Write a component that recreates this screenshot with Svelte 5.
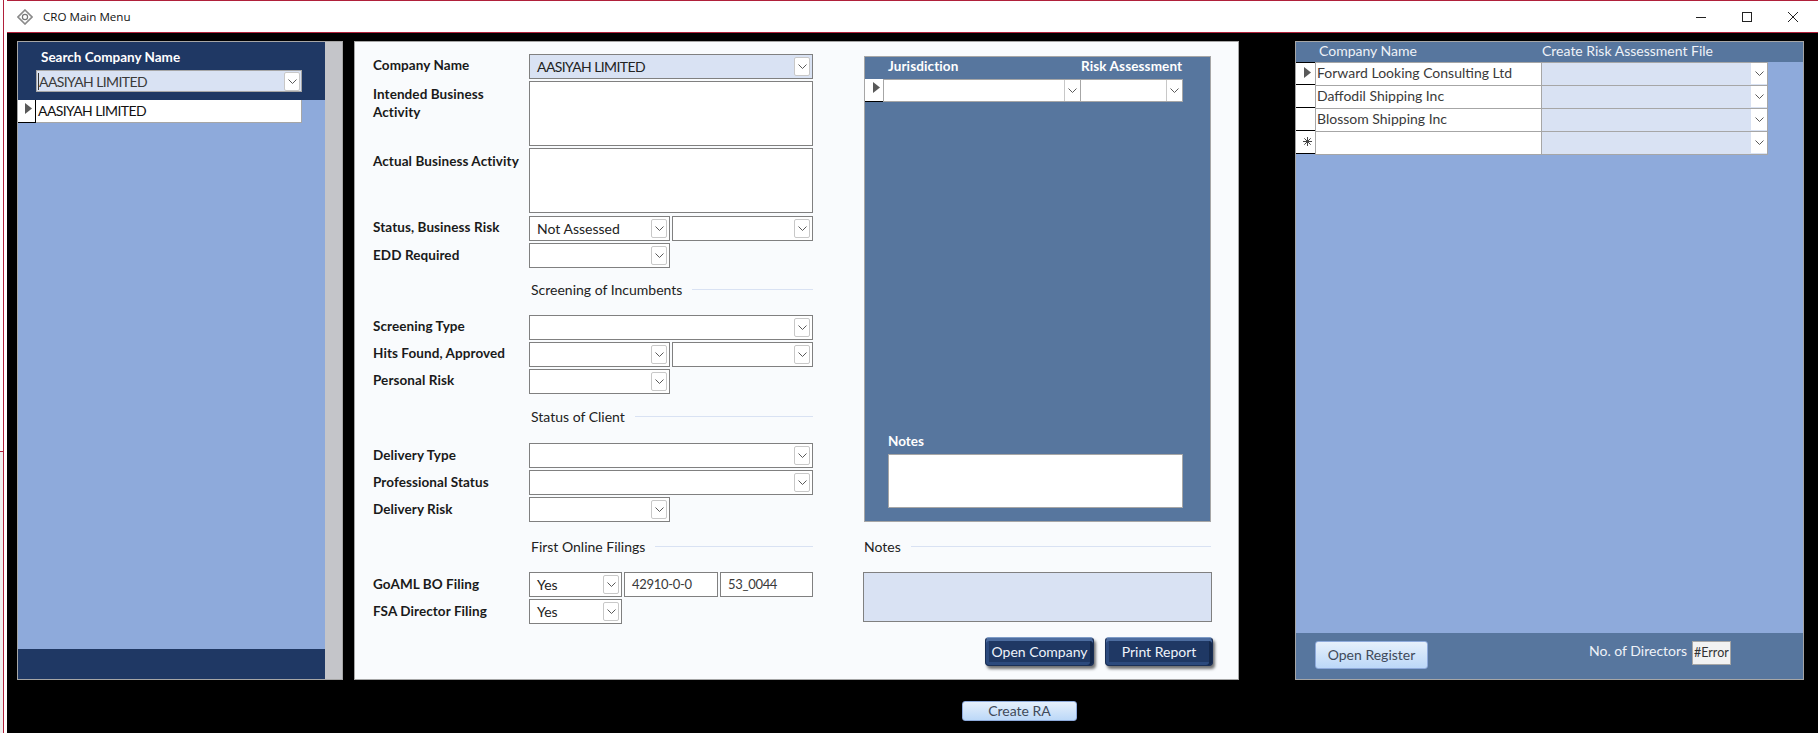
<script>
  const incumbents = [
    { label: 'Screening Type', wide: true },
    { label: 'Hits Found, Approved', pair: true },
    { label: 'Personal Risk' }
  ];
  const client = [
    { label: 'Delivery Type', wide: true },
    { label: 'Professional Status', wide: true },
    { label: 'Delivery Risk' }
  ];
  const subRows = [
    { name: 'Forward Looking Consulting Ltd', mark: 'current' },
    { name: 'Daffodil Shipping Inc', mark: '' },
    { name: 'Blossom Shipping Inc', mark: '' },
    { name: '', mark: 'new' }
  ];
</script>

{#snippet chevron()}
  <svg width="9" height="5" viewBox="0 0 9 5"><path d="M.5.5l4 4 4-4" fill="none" stroke="#5a5a5a" /></svg>
{/snippet}

{#snippet combo(value, cls)}
  <div class="combo {cls}">
    <span class="value">{value}</span>
    <span class="arrow">{@render chevron()}</span>
  </div>
{/snippet}

{#snippet pointer()}
  <svg width="7" height="11" viewBox="0 0 7 11"><path d="M0 0l7 5.5L0 11z" fill="#595959" /></svg>
{/snippet}

{#snippet field(row, cls)}
  <div class="row {cls}">
    <div class="label">{row.label}</div>
    {#if row.wide}
      {@render combo('', 'w284')}
    {:else if row.pair}
      {@render combo('', 'w141')}
      {@render combo('', 'w141')}
    {:else}
      {@render combo('', 'w141')}
    {/if}
  </div>
{/snippet}

<div class="window">
  <div class="edge">
    <div class="edge-l"><div class="edge-top"></div></div>
    <div class="edge-r"></div>
  </div>

  <div class="main">
    <header class="titlebar">
      <svg class="appicon" width="16" height="16" viewBox="0 0 16 16">
        <path d="M8 1l7 7-7 7-7-7z" fill="#fff" stroke="#8a8a8a" stroke-width="1.6" />
        <circle cx="8" cy="8" r="2.6" fill="none" stroke="#777" stroke-width="1.2" />
      </svg>
      <span class="title">CRO Main Menu</span>
      <div class="controls">
        <svg width="10" height="10" viewBox="0 0 10 10"><path d="M0 5.5h10" stroke="#222" /></svg>
        <svg width="10" height="10" viewBox="0 0 10 10"><rect x=".5" y=".5" width="9" height="9" fill="none" stroke="#222" /></svg>
        <svg width="10" height="10" viewBox="0 0 10 10"><path d="M0 0l10 10M10 0L0 10" stroke="#222" /></svg>
      </div>
    </header>

    <div class="panels">
      <section class="panel search">
        <div class="search-body">
          <div class="search-head">
            <div class="search-title">Search Company Name</div>
            <div class="combo search-combo">
              <span class="value">AASIYAH LIMITED</span>
              <span class="arrow">{@render chevron()}</span>
            </div>
          </div>
          <div class="search-list">
            <div class="selector boxed">{@render pointer()}</div>
            <div class="search-result">AASIYAH LIMITED</div>
          </div>
          <div class="search-foot"></div>
        </div>
        <div class="scroll"></div>
      </section>

      <section class="panel detail">
        <div class="form">
          <div class="row">
            <div class="label">Company Name</div>
            {@render combo('AASIYAH LIMITED', 'w284 tinted')}
          </div>
          <div class="row tall">
            <div class="label">Intended Business<br />Activity</div>
            <div class="box w284"></div>
          </div>
          <div class="row tall">
            <div class="label">Actual Business Activity</div>
            <div class="box w284"></div>
          </div>
          <div class="row after-tall">
            <div class="label">Status, Business Risk</div>
            {@render combo('Not Assessed', 'w141')}
            {@render combo('', 'w141')}
          </div>
          <div class="row low">
            <div class="label">EDD Required</div>
            {@render combo('', 'w141')}
          </div>

          <div class="section s1"><span>Screening of Incumbents</span><i></i></div>
          {#each incumbents as row}{@render field(row, '')}{/each}

          <div class="section s2"><span>Status of Client</span><i></i></div>
          {#each client as row}{@render field(row, 'low')}{/each}

          <div class="section s3"><span>First Online Filings</span><i></i></div>
          <div class="row low">
            <div class="label">GoAML BO Filing</div>
            {@render combo('Yes', 'w93')}
            <div class="box w94 text">42910-0-0</div>
            <div class="box w93 text">53_0044</div>
          </div>
          <div class="row low">
            <div class="label">FSA Director Filing</div>
            {@render combo('Yes', 'w93')}
          </div>
        </div>

        <div class="side">
          <div class="juris">
            <div class="juris-head">
              <span class="jh1">Jurisdiction</span>
              <span>Risk Assessment</span>
            </div>
            <div class="juris-row">
              <div class="selector">{@render pointer()}</div>
              <div class="gcell jc1"><span class="arrow">{@render chevron()}</span></div>
              <div class="gcell jc2"><span class="arrow">{@render chevron()}</span></div>
            </div>
            <div class="juris-notes">
              <div class="jn-label">Notes</div>
              <div class="jn-box"></div>
            </div>
          </div>

          <div class="section notes-sec"><span>Notes</span><i></i></div>
          <div class="notes-box"></div>

          <div class="actions">
            <button class="navy open">Open Company</button>
            <button class="navy">Print Report</button>
          </div>
        </div>
      </section>

      <section class="panel sub">
        <div class="sub-head">
          <span class="sh1">Company Name</span>
          <span>Create Risk Assessment File</span>
        </div>
        <div class="sub-body">
          {#each subRows as r}
            <div class="sub-row">
              <div class="selector">
                {#if r.mark === 'current'}
                  {@render pointer()}
                {:else if r.mark === 'new'}
                  <svg width="11" height="11" viewBox="0 0 11 11"><path d="M5.5 1v9M1 5.5h9M2.3 2.3l6.4 6.4M8.7 2.3l-6.4 6.4" stroke="#444" /></svg>
                {/if}
              </div>
              <div class="sub-name">{r.name}</div>
              <div class="sub-risk"><span class="arrow">{@render chevron()}</span></div>
            </div>
          {/each}
        </div>
        <div class="sub-foot">
          <button class="light reg">Open Register</button>
          <span class="dir-label">No. of Directors</span>
          <div class="dir-box">#Error</div>
        </div>
      </section>
    </div>

    <div class="bottom"><button class="light ra">Create RA</button></div>
  </div>
</div>

<style>
  :global(body) {
    margin: 0;
    background: #000;
  }
  .window {
    width: 1818px;
    height: 733px;
    display: flex;
    background: #000;
    overflow: hidden;
    font-family: Lato, "Open Sans", sans-serif;
    font-size: 14px;
    color: #222;
  }
  .edge {
    width: 7px;
    display: flex;
    flex: none;
  }
  .edge-l {
    width: 3px;
    background: #f0f0f0;
  }
  .edge-top {
    height: 451px;
    background: #fff;
    border-bottom: 1px solid #b0203a;
  }
  .edge-r {
    width: 3px;
    background: #fff;
    border-left: 1px solid #b0203a;
  }
  .main {
    flex: 1;
    min-width: 0;
  }
  .titlebar {
    height: 31px;
    display: flex;
    align-items: center;
    background: #fff;
    border-top: 1px solid #b0203a;
    border-bottom: 1px solid #b0203a;
    padding-left: 10px;
  }
  .appicon {
    margin-right: 10px;
  }
  .title {
    font-family: "Open Sans", sans-serif;
    font-size: 11.6px;
    color: #111;
  }
  .controls {
    margin-left: auto;
    display: flex;
    gap: 36px;
    padding-right: 20px;
  }
  .panels {
    display: flex;
    padding: 8px 0 0 10px;
    height: 639px;
  }
  .panel {
    box-sizing: border-box;
    height: 639px;
    border: 1px solid #a6a6a6;
    flex: none;
  }
  .search {
    width: 326px;
    display: flex;
    margin-right: 11px;
  }
  .search-body {
    width: 307px;
    display: flex;
    flex-direction: column;
    background: #8eaadb;
  }
  .scroll {
    flex: 1;
    background: #c4c5c9;
  }
  .search-head {
    height: 58px;
    box-sizing: border-box;
    background: #1f3864;
    padding: 5px 0 0 18px;
  }
  .search-title {
    color: #fff;
    font-size: 13.5px;
    font-weight: 700;
    padding-left: 5px;
    line-height: 20px;
    height: 23px;
  }
  .combo {
    box-sizing: border-box;
    height: 25px;
    border: 1px solid #808080;
    background: #fff;
    display: flex;
    align-items: center;
    flex: none;
    padding-right: 2px;
  }
  .value {
    flex: 1;
    padding-left: 7px;
    white-space: nowrap;
  }
  .arrow {
    box-sizing: border-box;
    width: 16px;
    height: 19px;
    background: #fff;
    border: 1px solid #c8c8c8;
    border-radius: 2px;
    display: flex;
    align-items: center;
    justify-content: center;
    flex: none;
  }
  .search-combo {
    width: 266px;
    height: 22px;
    background: #d9e2f3;
    border-color: #a6a6a6;
    padding-right: 1px;
  }
  .search-combo .value {
    margin-left: 1px;
    padding-left: 0;
    border-left: 1px solid #333;
    color: #3a3a3a;
    letter-spacing: -0.6px;
  }
  .tinted {
    background: #d9e2f3;
  }
  .tinted .value {
    letter-spacing: -0.6px;
  }
  .search-list {
    display: flex;
    height: 23px;
  }
  .selector {
    box-sizing: border-box;
    width: 18px;
    flex: none;
    background: #fff;
    border-bottom: 1px solid #000;
    display: flex;
    align-items: flex-start;
    justify-content: center;
    padding: 3px 0 0 4px;
  }
  .selector.boxed {
    border-right: 1px solid #000;
  }
  .search-result {
    box-sizing: border-box;
    width: 266px;
    background: #fff;
    border: 1px solid #a6a6a6;
    border-width: 0 1px 1px 0;
    padding-left: 2px;
    line-height: 21px;
    color: #111;
    letter-spacing: -0.6px;
  }
  .search-foot {
    margin-top: auto;
    height: 30px;
    background: #1f3864;
  }
  .detail {
    width: 885px;
    margin-right: 56px;
    background: #f9fbfd;
    display: flex;
  }
  .form {
    width: 509px;
    padding: 12px 0 0 18px;
    box-sizing: border-box;
    display: flex;
    flex-direction: column;
    flex: none;
  }
  .row {
    display: flex;
    gap: 2px;
    margin-bottom: 2px;
    flex: none;
  }
  .row.tall {
    height: 65px;
  }
  .row.after-tall {
    margin-top: 1px;
  }
  .label {
    width: 154px;
    flex: none;
    font-size: 13.5px;
    font-weight: 700;
    letter-spacing: 0.08px;
    color: #1a1a1a;
    line-height: 18px;
    padding-top: 2px;
    white-space: nowrap;
  }
  .tall .label {
    padding-top: 4px;
  }
  .low .label {
    padding-top: 3px;
  }
  .w284 { width: 284px; }
  .w141 { width: 141px; }
  .w93 { width: 93px; }
  .w94 { width: 94px; }
  .box {
    box-sizing: border-box;
    border: 1px solid #808080;
    background: #fff;
    flex: none;
  }
  .box.text {
    height: 25px;
    line-height: 23px;
    padding-left: 7px;
    color: #3a3a3a;
    font-size: 13px;
    letter-spacing: -0.3px;
  }
  .section {
    display: flex;
    align-items: center;
    gap: 10px;
    color: #222;
    flex: none;
  }
  .section i {
    flex: 1;
    height: 1px;
    background: #d9e2f3;
  }
  .s1, .s2, .s3 {
    margin-left: 156px;
    padding-left: 2px;
    width: 282px;
    box-sizing: content-box;
  }
  .s1 { height: 39px; padding-bottom: 5px; margin-bottom: 1px; }
  .s2 { height: 40px; padding-bottom: 5px; margin-bottom: 2px; }
  .s3 { height: 44px; padding-bottom: 4px; }
  .side {
    width: 350px;
    padding-top: 14px;
    display: flex;
    flex-direction: column;
  }
  .juris {
    box-sizing: border-box;
    width: 347px;
    height: 466px;
    border: 1px solid #a6a6a6;
    background: #57769e;
    display: flex;
    flex-direction: column;
  }
  .juris-head {
    box-sizing: border-box;
    display: flex;
    height: 22px;
    align-items: center;
    color: #fff;
    font-size: 13.5px;
    font-weight: 700;
    letter-spacing: 0.12px;
    padding: 0 0 5px 23px;
  }
  .jh1 {
    width: 193px;
  }
  .juris-row {
    display: flex;
    height: 23px;
  }
  .gcell {
    box-sizing: border-box;
    background: #fff;
    border: 1px solid #a6a6a6;
    display: flex;
    align-items: center;
    justify-content: flex-end;
    flex: none;
  }
  .gcell .arrow {
    height: 21px;
    border-width: 0 0 0 1px;
    border-radius: 0;
  }
  .jc1 { width: 198px; }
  .jc2 { width: 103px; margin-left: -1px; }
  .juris-notes {
    margin-top: auto;
    padding: 0 0 13px 23px;
  }
  .jn-label {
    color: #fff;
    font-size: 13.5px;
    font-weight: 700;
    height: 20px;
    line-height: 14px;
  }
  .jn-box {
    box-sizing: border-box;
    width: 295px;
    height: 54px;
    background: #fff;
    border: 1px solid #a6a6a6;
  }
  .notes-sec {
    height: 24px;
    margin-top: 12px;
    width: 347px;
  }
  .notes-box {
    box-sizing: border-box;
    margin: 14px 0 0 -1px;
    width: 349px;
    height: 50px;
    background: #d9e2f3;
    border: 1px solid #808080;
  }
  .actions {
    display: flex;
    justify-content: flex-end;
    gap: 11px;
    margin-top: 15px;
    padding-right: 1px;
  }
  button {
    font: inherit;
    padding: 0;
    box-sizing: border-box;
  }
  .navy {
    width: 108px;
    height: 29px;
    color: #eef3fb;
    background: #1f3864;
    border: 1px solid #1a2f55;
    border-top-color: #7f9cc6;
    border-radius: 4px;
    box-shadow:
      inset 0 3px 0 #4d6da0,
      inset 3px 0 0 #2c4a7d,
      inset -3px 0 0 #15294c,
      inset 0 -3px 0 #2c4a7d,
      2px 3px 3px rgba(0, 0, 0, 0.55);
  }
  .navy.open {
    width: 109px;
  }
  .light {
    color: #3f4a5a;
    border: 1px solid #8eaadb;
    border-radius: 3px;
    background: linear-gradient(#e6f0fb, #bcd8f8);
  }
  .sub {
    width: 509px;
    background: #8eaadb;
    display: flex;
    flex-direction: column;
  }
  .sub-head {
    box-sizing: border-box;
    height: 20px;
    flex: none;
    display: flex;
    align-items: center;
    background: #57769e;
    color: #eef2f8;
    padding: 0 0 3px 23px;
  }
  .sh1 {
    width: 223px;
  }
  .sub-body {
    flex: 1;
  }
  .sub-row {
    display: flex;
    height: 23px;
  }
  .sub-row .selector {
    width: 19px;
    padding-top: 5px;
  }
  .sub-row:first-child .selector {
    border-top: 1px solid #000;
    padding-top: 4px;
  }
  .sub-name {
    box-sizing: border-box;
    width: 226px;
    background: #fff;
    border: 1px solid #a6a6a6;
    border-width: 1px 0 1px 1px;
    margin-bottom: -1px;
    padding-left: 1px;
    line-height: 19px;
    color: #3a3a3a;
    white-space: nowrap;
  }
  .sub-risk {
    box-sizing: border-box;
    width: 227px;
    background: #d9e2f3;
    border: 1px solid #a6a6a6;
    margin-bottom: -1px;
    display: flex;
    justify-content: flex-end;
  }
  .sub-risk .arrow {
    height: 21px;
    border: 0;
    border-radius: 0;
  }
  .sub-foot {
    height: 46px;
    flex: none;
    background: #57769e;
    display: flex;
    align-items: flex-start;
    padding: 8px 0 0 19px;
    box-sizing: border-box;
  }
  .reg {
    width: 113px;
    height: 28px;
    padding-bottom: 2px;
  }
  .dir-label {
    width: 103px;
    color: #eef2f8;
    margin-left: 161px;
    line-height: 20px;
    white-space: nowrap;
  }
  .dir-box {
    box-sizing: border-box;
    width: 39px;
    height: 24px;
    background: #f2f2f2;
    border: 1px solid #a6a6a6;
    font-size: 12.5px;
    line-height: 22px;
    padding-left: 1px;
    white-space: nowrap;
    color: #333;
  }
  .bottom {
    padding: 21px 0 0 955px;
  }
  .ra {
    width: 115px;
    height: 20px;
    line-height: 16px;
  }
</style>
